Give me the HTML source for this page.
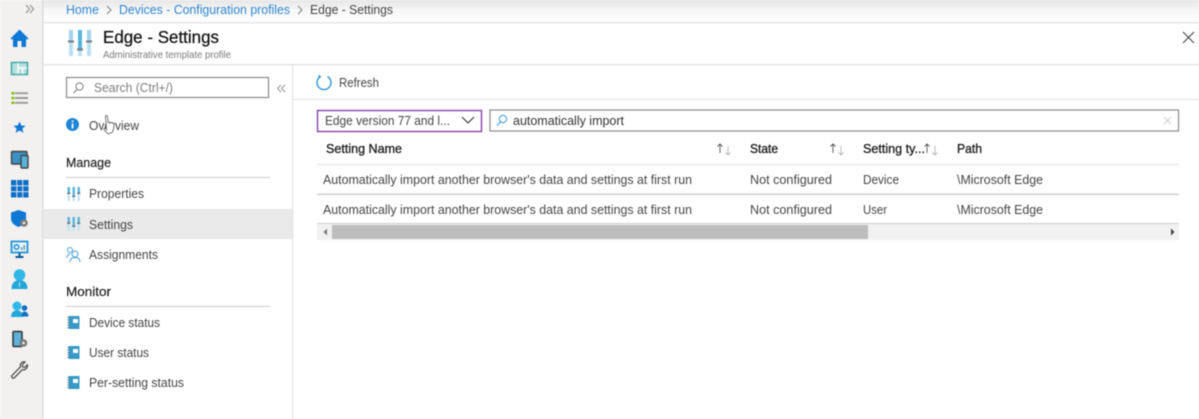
<!DOCTYPE html>
<html><head><meta charset="utf-8"><style>
html,body{margin:0;padding:0;background:#fff;width:1199px;height:419px;overflow:hidden}
svg{display:block;filter:blur(.45px)}
text{font-family:"Liberation Sans",sans-serif;font-size:13px;fill:#454545}
.b{fill:#1f1f1f;font-size:13px;stroke:#1f1f1f;stroke-width:.35px}
.l{fill:#2f86cf}
</style></head><body>
<svg width="1199" height="419" viewBox="0 0 1199 419" xmlns="http://www.w3.org/2000/svg">
<defs>
<linearGradient id="top" x1="0" y1="0" x2="0" y2="1"><stop offset="0" stop-color="#e6e6e6"/><stop offset=".5" stop-color="#f8f8f8"/><stop offset="1" stop-color="#fff"/></linearGradient>
<g id="sl">
<rect x="0" y="0" width="2.400" height="14" fill="#c3e4f3"/><rect x="5" y="0" width="2.400" height="14" fill="#c3e4f3"/><rect x="10" y="0" width="2.400" height="14" fill="#c3e4f3"/>
<rect x="0" y="0" width="2.400" height="6" fill="#59b4d9"/><rect x="5" y="0" width="2.400" height="9" fill="#59b4d9"/><rect x="10" y="0" width="2.400" height="6" fill="#59b4d9"/>
<rect x="-.4" y="5.500" width="3.200" height="1.500" fill="#777"/><rect x="4.600" y="8.500" width="3.200" height="1.500" fill="#777"/><rect x="9.600" y="5.500" width="3.200" height="1.500" fill="#777"/>
</g>
<g id="bk">
<rect x="1.500" y="0" width="11" height="13" fill="#3999c6"/><rect x="6" y="3" width="5" height="4" fill="#fff"/>
<path d="M0 1.500h2.500M0 4h2.500M0 6.500h2.500M0 9h2.500M0 11.500h2.500" stroke="#66808c" stroke-width=".8"/>
</g>
</defs>
<rect width="1199" height="22" fill="url(#top)"/>
<rect width="43" height="419" fill="#f2f1f0"/>
<rect x="42" y="0" width="1.500" height="419" fill="#dcdcdc"/>
<rect x="43" y="22" width="1156" height="1.500" fill="#e6e6e6"/>
<rect x="43" y="64" width="1156" height="1.500" fill="#e3e3e3"/>
<rect x="292" y="65" width="1.200" height="354" fill="#e3e3e3"/>
<rect x="293" y="99" width="906" height="1" fill="#e3e3e3"/>
<rect x="43" y="209" width="249" height="30" fill="#ebeaea"/>

<!-- breadcrumbs -->
<path d="M26 5l3.500 4-3.500 4M30 5l3.500 4-3.500 4" fill="none" stroke="#8a8a8a" stroke-width="1"/>
<text x="66" y="14" class="l" textLength="33" lengthAdjust="spacingAndGlyphs">Home</text>
<path d="M107 6l4 4-4 4" fill="none" stroke="#777" stroke-width=".9"/>
<text x="119" y="14" class="l" textLength="171" lengthAdjust="spacingAndGlyphs">Devices - Configuration profiles</text>
<path d="M298 6l4 4-4 4" fill="none" stroke="#777" stroke-width=".9"/>
<text x="310" y="14" textLength="83" lengthAdjust="spacingAndGlyphs">Edge - Settings</text>

<!-- left rail icons -->
<path d="M10.500 38.500L19.500 29.500l9 9-1.300 1.200-1.200-1V47h-4.500v-6h-4v6H13v-8.300l-1.200 1z" fill="#0f78d4"/>
<rect x="11.500" y="62.500" width="16" height="12" fill="#b6e0de" stroke="#40a8a5" stroke-width="1.500"/><path d="M18 63v11M18 68h9M22.500 68v6" stroke="#fff" stroke-width="1.400"/>
<rect x="11.500" y="92" width="2.800" height="2.400" fill="#7fba00"/><rect x="11.500" y="96.800" width="2.800" height="2.400" fill="#7fba00"/><rect x="11.500" y="101.600" width="2.800" height="2.400" fill="#7fba00"/>
<path d="M15 93.200h13M15 98h13M15 102.800h13" stroke="#9a9a9a" stroke-width="1.900"/>
<path d="M19.500 121.500l1.800 4 4.300.3-3.300 2.800 1.100 4.300-3.900-2.400-3.900 2.400 1.100-4.300-3.300-2.800 4.300-.3z" fill="#0f78d4"/>
<rect x="11.500" y="151.500" width="15.500" height="12.500" rx="1" fill="#3c91c4" stroke="#444" stroke-width="1.400"/>
<rect x="21" y="155.500" width="7" height="12.500" rx="1" fill="#59b4d9" stroke="#444" stroke-width="1.400"/>
<path d="M11 180h17.500v17.500H11z" fill="#0f6fc6"/><path d="M16.800 180v17.500M22.700 180v17.500M11 185.800h17.500M11 191.700h17.500" stroke="#f2f1f0" stroke-width=".9"/>
<path d="M18.500 210l7.500 2.500v6c0 4.500-3.500 7-7.500 8.500-4-1.500-7.500-4-7.500-8.500v-6z" fill="#0f78d4"/>
<circle cx="24" cy="223" r="3.800" fill="#7a7a7a"/><circle cx="24" cy="223" r="1.300" fill="#f2f1f0"/>
<rect x="11.500" y="241.500" width="16" height="11" fill="#e8f6fb" stroke="#1d8fd6" stroke-width="1.700"/><circle cx="16.500" cy="247" r="2.300" fill="none" stroke="#1d8fd6" stroke-width="1.500"/><path d="M21 250v-3h1.500v3M23.500 250v-5H25v5" fill="#79a"/>
<path d="M19.500 253v3M15.500 257h8" stroke="#0a5a96" stroke-width="2"/>
<circle cx="19.500" cy="275" r="5.800" fill="#2fb8e6"/><path d="M11.500 289c0-5.500 2.500-7.500 5-8.500h6c2.500 1 5 3 5 8.500z" fill="#23a7d8"/><path d="M19.500 282v5" stroke="#e8f8fd" stroke-width=".8"/>
<circle cx="17" cy="306" r="4.500" fill="#2fb8e6"/><path d="M11 317c0-4.500 2.500-6 4.500-6.500h3c2 .5 4.500 2 4.500 6.500z" fill="#23a7d8"/>
<circle cx="24.500" cy="308" r="2.800" fill="#0f6fc6"/><path d="M21.500 316.500c0-3 1-5 3-5s4 2 4 5z" fill="#0f6fc6"/>
<rect x="13" y="331.500" width="9" height="15" rx="1" fill="#5fb0da" stroke="#333" stroke-width="1.500"/>
<circle cx="23.500" cy="343" r="3.800" fill="#7a7a7a"/><circle cx="23.500" cy="343" r="1.300" fill="#f2f1f0"/>
<path d="M12 375.500l8.500-8.700c-1-2.800 1.500-5.800 4.500-4.800l-2.700 2.700.3 2.300 2.300.3 2.400-2.500c.7 3-2 5.800-4.800 4.700l-8.200 8.300c-1.400 1.300-3.400-.8-2.300-2.300z" fill="none" stroke="#444" stroke-width="1.200"/>

<!-- header -->
<g>
<rect x="69" y="30" width="4" height="26" fill="#b7dff1"/><rect x="78" y="30" width="4" height="26" fill="#b7dff1"/><rect x="87" y="30" width="4" height="26" fill="#b7dff1"/>
<rect x="78" y="30" width="4" height="19" fill="#59b4d9"/><rect x="69" y="30" width="4" height="11" fill="#9fd4ec"/><rect x="87" y="30" width="4" height="11" fill="#9fd4ec"/>
<rect x="68" y="40.500" width="6" height="2" fill="#7a7a7a"/><rect x="77" y="48.500" width="6" height="2" fill="#7a7a7a"/><rect x="86" y="40.500" width="6" height="2" fill="#7a7a7a"/>
</g>
<text x="103" y="43" style="font-size:17.500px;fill:#111;stroke:#111;stroke-width:.25px" textLength="116" lengthAdjust="spacingAndGlyphs">Edge - Settings</text>
<text x="103" y="58" style="font-size:10.500px;fill:#7a7a7a" textLength="128" lengthAdjust="spacingAndGlyphs">Administrative template profile</text>
<path d="M1183 32l11 11M1194 32l-11 11" stroke="#444" stroke-width="1.100"/>

<!-- sidebar -->
<rect x="66.500" y="77.500" width="202" height="20" fill="#fff" stroke="#8a8a8a" stroke-width="1.200"/>
<circle cx="79.500" cy="86.500" r="3.600" fill="none" stroke="#777" stroke-width="1"/><path d="M77 89.500l-3.500 3.500" stroke="#777" stroke-width="1"/>
<text x="94" y="92" style="fill:#7d7d7d" textLength="79" lengthAdjust="spacingAndGlyphs">Search (Ctrl+/)</text>
<path d="M281 85l-3.500 3.500 3.500 3.500M285 85l-3.500 3.500 3.500 3.500" fill="none" stroke="#8a8a8a" stroke-width=".9"/>
<circle cx="72.500" cy="124.500" r="6.500" fill="#1f85d6"/><rect x="71.700" y="123.500" width="1.700" height="5" fill="#fff"/><rect x="71.700" y="120.500" width="1.700" height="1.700" fill="#fff"/>
<text x="89" y="130" textLength="50" lengthAdjust="spacingAndGlyphs">Overview</text>
<path d="M107 133c-1.500-2-3.500-3.500-3-4.500.6-.8 1.700 0 2.500 1l-1-13c0-1.400 1.700-1.400 2 0l.7 6.500c.2-1.200 1.700-1.200 2 0 .3-1 1.700-1 2 .2.400-.6 1.600-.4 1.700.7.200 2.800-.1 5.500-1.200 7.800-1.500 1.700-4.700 2.800-5.700 1.300z" fill="#fff" stroke="#555" stroke-width=".8"/>
<text x="66" y="167" class="b" style="stroke-width:.2px" textLength="45" lengthAdjust="spacingAndGlyphs">Manage</text>
<rect x="66" y="177" width="204" height="1" fill="#c8c8c8"/>
<use href="#sl" transform="translate(67.500 187)"/>
<text x="89" y="198" textLength="55" lengthAdjust="spacingAndGlyphs">Properties</text>
<use href="#sl" transform="translate(67.500 217)"/>
<text x="89" y="229" textLength="44" lengthAdjust="spacingAndGlyphs">Settings</text>
<g fill="none" stroke="#4aa3d8" stroke-width="1"><circle cx="70" cy="250" r="2.500"/><path d="M67 258c0-2.500 1-3.800 3-4"/><circle cx="75" cy="254" r="3"/><path d="M70 262c0-3 2-4.500 5-4.500s5 1.500 5 4.500"/></g>
<text x="89" y="259" textLength="69" lengthAdjust="spacingAndGlyphs">Assignments</text>
<text x="66" y="296" class="b" style="stroke-width:.2px" textLength="45" lengthAdjust="spacingAndGlyphs">Monitor</text>
<rect x="66" y="306" width="204" height="1" fill="#c8c8c8"/>
<use href="#bk" transform="translate(67 316)"/>
<text x="89" y="327" textLength="71" lengthAdjust="spacingAndGlyphs">Device status</text>
<use href="#bk" transform="translate(67 346)"/>
<text x="89" y="357" textLength="60" lengthAdjust="spacingAndGlyphs">User status</text>
<use href="#bk" transform="translate(67 376)"/>
<text x="89" y="387" textLength="95" lengthAdjust="spacingAndGlyphs">Per-setting status</text>

<!-- toolbar -->
<path d="M320.500 76.500a7 7 0 1 0 7 0" fill="none" stroke="#2f95dc" stroke-width="1.400"/><path d="M318.500 74.500l3 2.500-3 1.500z" fill="#2f95dc"/>
<text x="339" y="87" textLength="40" lengthAdjust="spacingAndGlyphs">Refresh</text>

<!-- filters -->
<rect x="317.500" y="110.500" width="164" height="21" fill="#fff" stroke="#8a4fb0" stroke-width="1.500"/>
<text x="325" y="125" textLength="125" lengthAdjust="spacingAndGlyphs">Edge version 77 and l...</text>
<path d="M462 117l6 6 6-6" fill="none" stroke="#333" stroke-width="1.100"/>
<rect x="490" y="110" width="688.500" height="21" fill="#fff" stroke="#8a8a8a" stroke-width="1.200"/>
<circle cx="503" cy="119" r="3.600" fill="none" stroke="#2f95dc" stroke-width="1"/><path d="M500.500 122l-3.500 3.500" stroke="#2f95dc" stroke-width="1"/>
<text x="513" y="125" style="fill:#333" textLength="111" lengthAdjust="spacingAndGlyphs">automatically import</text>
<path d="M1164 117l7 7M1171 117l-7 7" stroke="#c0c0c0" stroke-width=".8"/>

<!-- table header -->
<text x="326" y="153" class="b" textLength="76" lengthAdjust="spacingAndGlyphs">Setting Name</text>
<text x="750" y="153" class="b" textLength="28" lengthAdjust="spacingAndGlyphs">State</text>
<text x="863" y="153" class="b" textLength="62" lengthAdjust="spacingAndGlyphs">Setting ty...</text>
<text x="957" y="153" class="b" textLength="25" lengthAdjust="spacingAndGlyphs">Path</text>
<g fill="none" stroke-width=".9">
<path d="M720 153v-9M717.500 146.500l2.500-2.500 2.500 2.500M927 153v-9M924.500 146.500l2.500-2.500 2.500 2.500M833 153v-9M830.500 146.500l2.500-2.500 2.500 2.500" stroke="#555"/>
<path d="M728 146v9M725.500 152.500l2.500 2.500 2.500-2.500M935 146v9M932.500 152.500l2.500 2.500 2.500-2.500M841 146v9M838.500 152.500l2.500 2.500 2.500-2.500" stroke="#b5b5b5"/>
</g>
<rect x="317" y="164" width="862" height="1" fill="#e3e3e3"/>
<rect x="317" y="193.500" width="862" height="1.500" fill="#cfcfcf"/>
<rect x="317" y="223" width="862" height="1.500" fill="#cfcfcf"/>

<!-- rows -->
<text x="323" y="184" textLength="369" lengthAdjust="spacingAndGlyphs">Automatically import another browser's data and settings at first run</text>
<text x="750" y="184" textLength="82" lengthAdjust="spacingAndGlyphs">Not configured</text>
<text x="863" y="184" textLength="36" lengthAdjust="spacingAndGlyphs">Device</text>
<text x="957" y="184" textLength="86" lengthAdjust="spacingAndGlyphs">\Microsoft Edge</text>
<text x="323" y="214" textLength="369" lengthAdjust="spacingAndGlyphs">Automatically import another browser's data and settings at first run</text>
<text x="750" y="214" textLength="82" lengthAdjust="spacingAndGlyphs">Not configured</text>
<text x="863" y="214" textLength="24" lengthAdjust="spacingAndGlyphs">User</text>
<text x="957" y="214" textLength="86" lengthAdjust="spacingAndGlyphs">\Microsoft Edge</text>

<!-- scrollbar -->
<rect x="317" y="224" width="862" height="16" fill="#f1f1f1"/>
<rect x="332" y="225" width="536" height="14" fill="#bdbdbd"/>
<path d="M327 228.500v7l-3.500-3.500z" fill="#7a7a7a"/><path d="M1171 228.500v7l3.500-3.500z" fill="#444"/>
</svg>
</body></html>
